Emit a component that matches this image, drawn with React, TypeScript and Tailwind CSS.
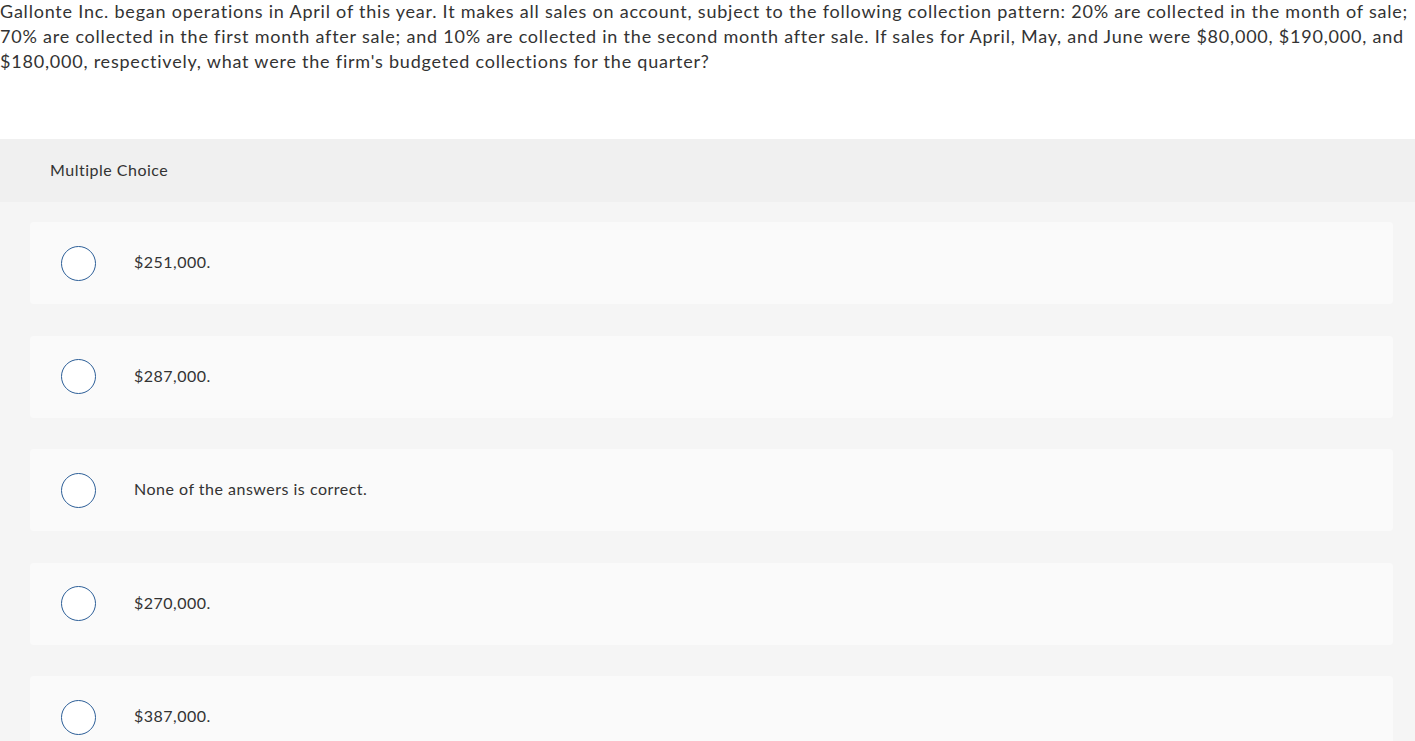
import React from "react";

const options = [
  "$251,000.",
  "$287,000.",
  "None of the answers is correct.",
  "$270,000.",
  "$387,000.",
];

export default function App() {
  return (
    <div className="w-[1415px] h-[741px] overflow-hidden bg-white" style={{ fontFamily: "Lato, 'Open Sans', sans-serif" }}>
      <div className="text-[18px] leading-[25px] text-[#333] pb-[65px] -mt-[1px] tracking-[0.78px]">
        <div className="whitespace-nowrap">Gallonte Inc. began operations in April of this year. It makes all sales on account, subject to the following collection pattern: 20% are collected in the month of sale;</div>
        <div className="whitespace-nowrap">70% are collected in the first month after sale; and 10% are collected in the second month after sale. If sales for April, May, and June were $80,000, $190,000, and</div>
        <div className="whitespace-nowrap">$180,000, respectively, what were the firm's budgeted collections for the quarter?</div>
      </div>
      <div className="h-[63px] bg-[#f0f0f0] flex items-center pl-[50px] text-[16px] text-[#333] tracking-[0.5px]">
        <span className="mb-[2px]">Multiple Choice</span>
      </div>
      <div className="bg-[#f5f5f5] pt-[20px] pl-[30px] pr-[22px] flex flex-col gap-[31.5px] min-h-[600px] tracking-[0.5px]">
        {options.map((o) => (
          <div key={o} className="h-[82px] bg-[#fafafa] rounded-[4px] flex items-center">
            <div className="ml-[31px] w-[35px] h-[35px] rounded-full border border-[#2d5f98] bg-white shrink-0" />
            <div className="ml-[38px] mb-[2px] text-[16px] text-[#333]">{o}</div>
          </div>
        ))}
      </div>
    </div>
  );
}
